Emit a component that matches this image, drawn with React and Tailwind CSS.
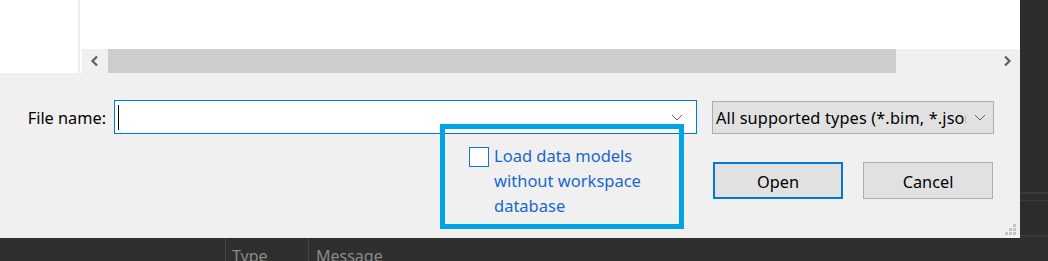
import React from "react";

const font = { fontFamily: '"Noto Sans", "Open Sans", sans-serif' };

function Chevron({ dir, className }) {
  return (
    <svg width="10" height="12" viewBox="0 0 10 12" className={className}>
      {dir === "left" ? (
        <polyline points="7,1.5 2.5,6 7,10.5" fill="none" stroke="#606060" strokeWidth="2.2" />
      ) : (
        <polyline points="3,1.5 7.5,6 3,10.5" fill="none" stroke="#606060" strokeWidth="2.2" />
      )}
    </svg>
  );
}

function Down({ className }) {
  return (
    <svg width="12" height="7" viewBox="0 0 12 7" className={className}>
      <polyline points="1,1 6,6 11,1" fill="none" stroke="#606060" strokeWidth="1" />
    </svg>
  );
}

export default function App() {
  return (
    <div
      className="w-[1048px] h-[261px] bg-[#2d2d2d] flex flex-col overflow-hidden"
      style={font}
    >
      <div className="flex h-[238px]">
        {/* Dialog */}
        <div className="relative w-[1020px] h-[238px] bg-[#f0f0f0] flex flex-col">
          {/* Top browse area */}
          <div className="flex h-[73px]">
            <div className="w-[78px] bg-white" />
            <div className="w-[2px] bg-[#f0f0f0]" />
            <div className="flex-1 bg-white flex flex-col pl-[2px]">
              <div className="flex-1" />
              <div className="h-[24px] bg-[#f0f0f0] flex items-center">
                <div className="w-[26px] h-full flex items-center justify-center">
                  <Chevron dir="left" />
                </div>
                <div className="w-[788px] h-full bg-[#cdcdcd]" />
                <div className="flex-1" />
                <div className="w-[26px] h-full flex items-center justify-center">
                  <Chevron dir="right" />
                </div>
              </div>
            </div>
          </div>

          {/* File name row */}
          <div className="flex items-center mt-[27px] h-[34px]">
            <div className="w-[114px] pr-[8px] pt-[3px] text-right text-[16.3px] text-[#000000] leading-none">
              File name:
            </div>
            <div className="relative w-[583px] h-[34px] bg-white border border-[#0078d7] flex items-center">
              <div className="ml-[3px] w-[1px] h-[25px] bg-black" />
              <Down className="absolute right-[13px] top-[13px]" />
            </div>
            <div className="ml-[15px] w-[282px] h-[33px] bg-[#e1e1e1] border border-[#adadad] flex items-center overflow-hidden relative">
              <span className="pl-[3px] pt-[3px] text-[16.3px] tracking-[0.15px] text-black whitespace-nowrap leading-none">
                All supported types (*.bim, *.json)
              </span>
              <div className="absolute right-0 top-0 h-full w-[27px] bg-[#e1e1e1] flex items-center justify-center">
                <Down />
              </div>
            </div>
          </div>

          {/* Options + buttons */}
          <div className="flex">
            <div className="ml-[469px] w-[244px] mt-[13px] flex items-start">
              <div className="w-[20px] h-[20px] bg-white border-[1.5px] border-[#1c6fd1] shrink-0" />
              <div className="ml-[5px] -mt-[4px] text-[16.5px] leading-[25px] text-[#1a66d0]">
                Load data models
                <br />
                without workspace
                <br />
                database
              </div>
            </div>
            <div className="mt-[28px] flex gap-[20px]">
              <button className="w-[130px] h-[37px] pt-[3px] bg-[#e1e1e1] border-2 border-[#0078d7] text-[16.3px] text-black">
                Open
              </button>
              <button className="w-[130px] h-[37px] pt-[3px] bg-[#e1e1e1] border border-[#adadad] text-[16.3px] text-black">
                Cancel
              </button>
            </div>
          </div>

          {/* Highlight annotation */}
          <div className="absolute left-[440px] top-[124px] w-[244px] h-[105px] border-[5px] border-[#00a2e8] pointer-events-none" />

          {/* Resize grip */}
          <svg className="absolute right-[3px] bottom-[2px]" width="12" height="12" viewBox="0 0 12 12">
            <rect x="8" y="0" width="3" height="3" fill="#c4c4c4" />
            <rect x="4" y="4" width="3" height="3" fill="#c4c4c4" />
            <rect x="8" y="4" width="3" height="3" fill="#c4c4c4" />
            <rect x="0" y="8" width="3" height="3" fill="#c4c4c4" />
            <rect x="4" y="8" width="3" height="3" fill="#c4c4c4" />
            <rect x="8" y="8" width="3" height="3" fill="#c4c4c4" />
          </svg>
        </div>

        {/* Right dark strip */}
        <div className="flex-1 bg-[#2d2d2d] flex flex-col">
          <div className="h-[192px]" />
          <div className="h-[2px] bg-[#3a3a3a]" />
          <div className="h-[6px]" />
          <div className="h-[1px] bg-[#3a3a3a]" />
          <div className="h-[34px]" />
          <div className="h-[2px] bg-[#3a3a3a]" />
        </div>
      </div>

      {/* Bottom dark pane */}
      <div className="flex h-[23px] bg-[#2f2f2f] text-[16px] text-[#8a8a8a]">
        <div className="w-[225px]" />
        <div className="w-[1px] bg-[#444444]" />
        <div className="w-[82px] pl-[6px] pt-[8px] leading-[20px]">Type</div>
        <div className="w-[1px] bg-[#444444]" />
        <div className="flex-1 pl-[7px] pt-[8px] leading-[20px]">Message</div>
      </div>
    </div>
  );
}
